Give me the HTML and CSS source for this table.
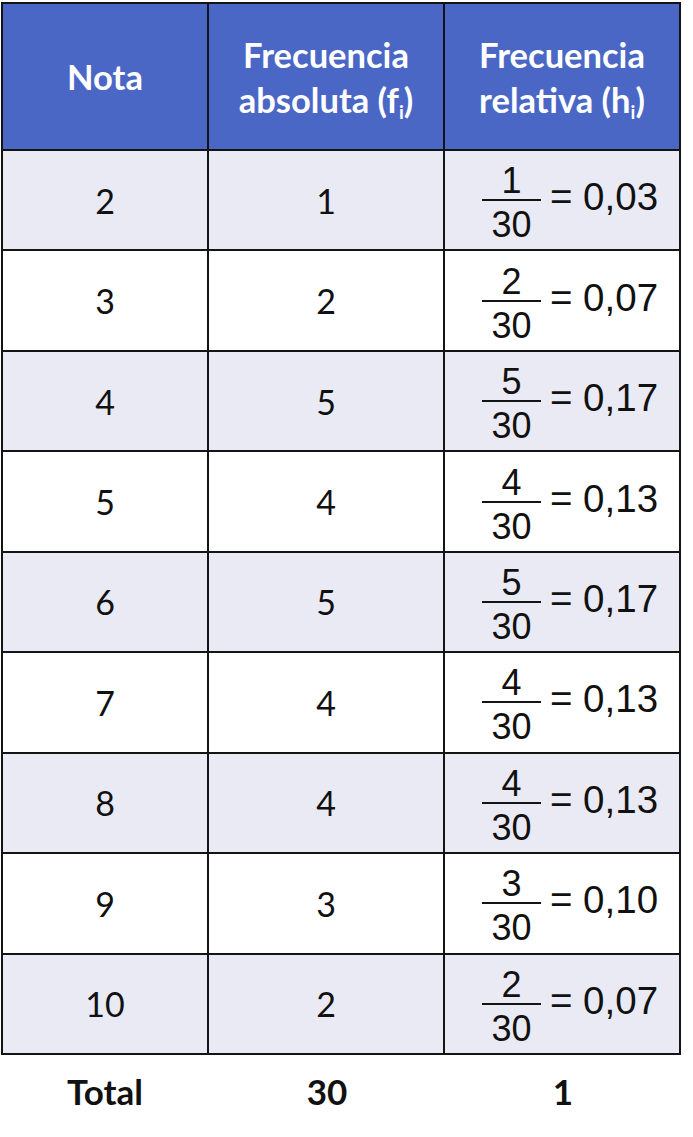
FILE: index.html
```html
<!DOCTYPE html>
<html lang="es">
<head>
<meta charset="utf-8">
<title>Tabla de frecuencias</title>
<link rel="stylesheet" href="styles.css">
</head>
<body>
<div class="wrap">
<table class="freq">
  <colgroup>
    <col class="c1"><col class="c2"><col class="c3">
  </colgroup>
  <thead>
    <tr class="head">
      <th>Nota</th>
      <th>Frecuencia<br>absoluta (f<sub>i</sub>)</th>
      <th>Frecuencia<br>relativa (h<sub>i</sub>)</th>
    </tr>
  </thead>
  <tbody>
    <tr class="alt"><td>2</td><td>1</td><td class="rel"><span class="eq"><span class="frac"><span class="num">1</span><span class="den">30</span></span><span class="res">= 0,03</span></span></td></tr>
    <tr><td>3</td><td>2</td><td class="rel"><span class="eq"><span class="frac"><span class="num">2</span><span class="den">30</span></span><span class="res">= 0,07</span></span></td></tr>
    <tr class="alt"><td>4</td><td>5</td><td class="rel"><span class="eq"><span class="frac"><span class="num">5</span><span class="den">30</span></span><span class="res">= 0,17</span></span></td></tr>
    <tr><td>5</td><td>4</td><td class="rel"><span class="eq"><span class="frac"><span class="num">4</span><span class="den">30</span></span><span class="res">= 0,13</span></span></td></tr>
    <tr class="alt"><td>6</td><td>5</td><td class="rel"><span class="eq"><span class="frac"><span class="num">5</span><span class="den">30</span></span><span class="res">= 0,17</span></span></td></tr>
    <tr><td>7</td><td>4</td><td class="rel"><span class="eq"><span class="frac"><span class="num">4</span><span class="den">30</span></span><span class="res">= 0,13</span></span></td></tr>
    <tr class="alt"><td>8</td><td>4</td><td class="rel"><span class="eq"><span class="frac"><span class="num">4</span><span class="den">30</span></span><span class="res">= 0,13</span></span></td></tr>
    <tr><td>9</td><td>3</td><td class="rel"><span class="eq"><span class="frac"><span class="num">3</span><span class="den">30</span></span><span class="res">= 0,10</span></span></td></tr>
    <tr class="alt"><td>10</td><td>2</td><td class="rel"><span class="eq"><span class="frac"><span class="num">2</span><span class="den">30</span></span><span class="res">= 0,07</span></span></td></tr>
  </tbody>
  <tfoot>
    <tr class="total"><td>Total</td><td>30</td><td>1</td></tr>
  </tfoot>
</table>
</div>
</body>
</html>
```
FILE: styles.css
```css
html, body {
  margin: 0;
  padding: 0;
  background: #ffffff;
}

.wrap {
  padding: 2px 0 0 1px;
}

.freq {
  border-collapse: separate;
  border-spacing: 0;
  table-layout: fixed;
  width: 680px;
  font-family: "Lato", "Liberation Sans", sans-serif;
  color: #111111;
}

.c1 { width: 208px; }
.c2 { width: 236px; }
.c3 { width: 236px; }

.freq thead th,
.freq tbody td {
  border-right: 2px solid #141414;
  border-bottom: 2px solid #141414;
}

.freq thead th:first-child,
.freq tbody td:first-child {
  border-left: 2px solid #141414;
}

.freq thead th {
  border-top: 2px solid #141414;
}

.freq th,
.freq td {
  box-sizing: border-box;
  padding: 0;
  text-align: center;
  vertical-align: middle;
}

.head {
  height: 149px;
}

.head th {
  background: #4b67c6;
  color: #ffffff;
  font-weight: 700;
  font-size: 34.5px;
  line-height: 45px;
}

.head sub {
  font-size: 0.55em;
  vertical-align: -0.3em;
  line-height: 0;
}

tbody tr {
  height: 100.44px;
}

tbody td {
  font-size: 34px;
  background: #ffffff;
}

tbody tr.alt td {
  background: #e9eaf3;
}

.rel {
  font-family: "Liberation Sans", Arial, sans-serif;
}

.freq tbody td.rel {
  padding-left: 16px;
}

.eq {
  display: inline-flex;
  align-items: center;
  gap: 9px;
}

.frac {
  display: flex;
  flex-direction: column;
  align-items: stretch;
  width: 59px;
  font-size: 36px;
  line-height: 37px;
}

.num {
  display: block;
  padding-top: 5px;
  border-bottom: 2.5px solid #141414;
}

.den {
  display: block;
  padding-top: 5px;
}

.res {
  font-size: 38.5px;
  line-height: 39px;
  margin-bottom: 7px;
  white-space: nowrap;
}

.total {
  height: 72px;
}

.freq .total td {
  font-weight: 700;
  font-size: 35px;
  background: #ffffff;
}
```
